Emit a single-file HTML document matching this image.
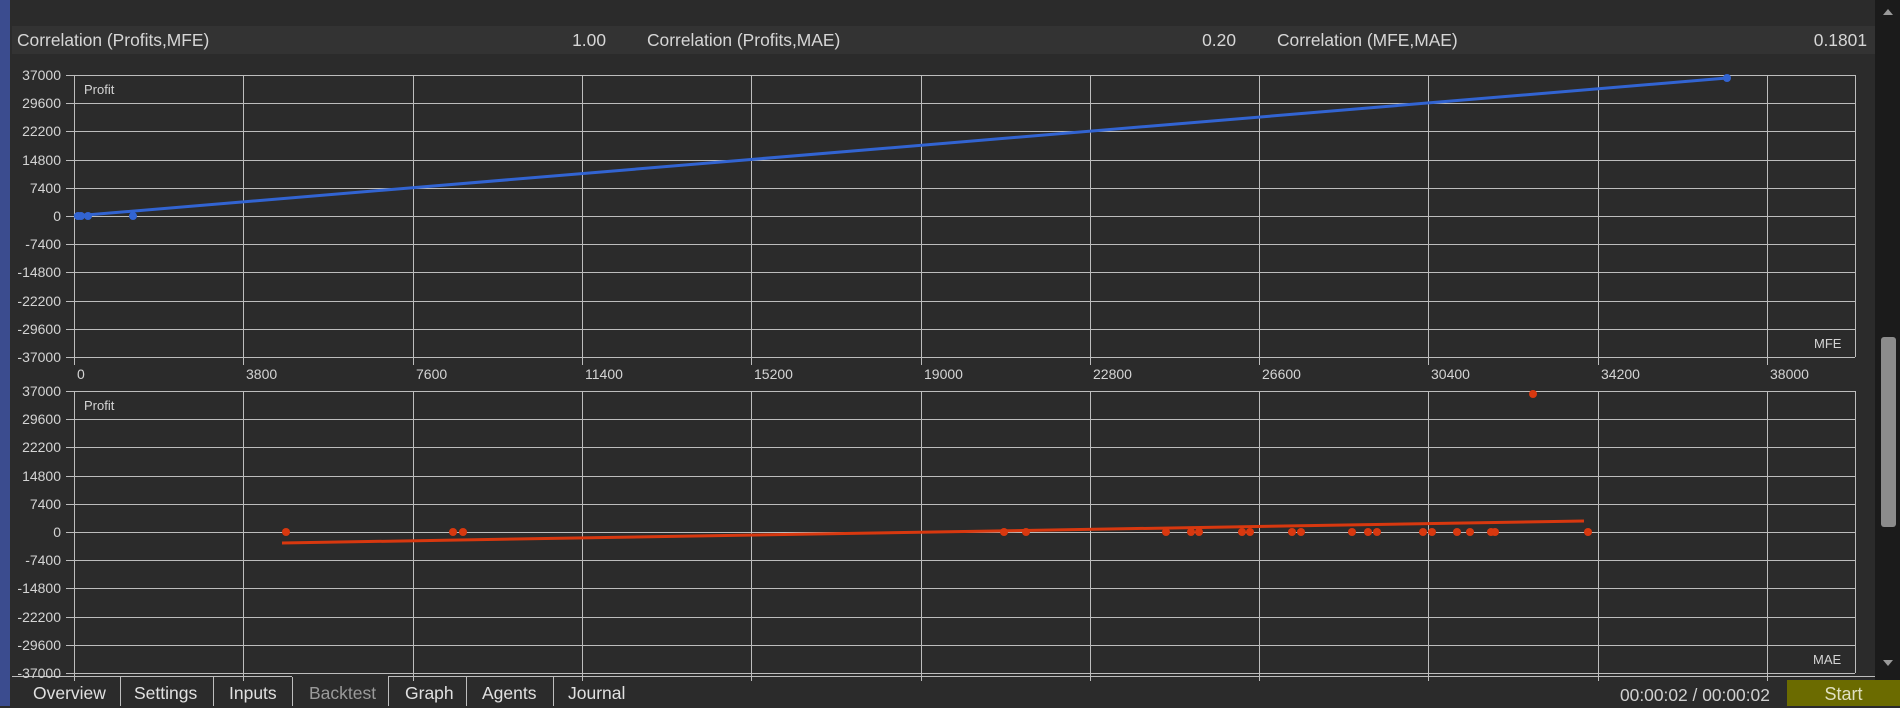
<!DOCTYPE html>
<html><head><meta charset="utf-8"><style>
body{margin:0;width:1900px;height:706px;background:#2b2b2b;overflow:hidden;font-family:"Liberation Sans",sans-serif;position:relative}
.a{position:absolute;white-space:nowrap}
.cb{left:12px;top:26px;width:1863px;height:28px;background:#333333}
.ct{font-size:17.4px;color:#d6d6d6;top:28px;line-height:24px}
.tab{top:682px;font-size:17.5px;color:#e0e0e0;line-height:22px}
.sep{top:677px;width:1px;height:29px;background:#bdbdbd}
</style></head><body>
<div class="a" style="left:0;top:0;width:10px;height:706px;background:#3b4c8f"></div>
<div class="a cb"></div>
<div class="a ct" style="left:17px">Correlation (Profits,MFE)</div>
<div class="a ct" style="right:1294px">1.00</div>
<div class="a ct" style="left:647px">Correlation (Profits,MAE)</div>
<div class="a ct" style="right:664px">0.20</div>
<div class="a ct" style="left:1277px">Correlation (MFE,MAE)</div>
<div class="a ct" style="right:33px">0.1801</div>
<div class="a" style="left:1875px;top:0;width:25px;height:706px;background:#1b1b1b"></div>
<div class="a" style="left:1881px;top:337px;width:15px;height:190px;background:#8c8c8c;border-radius:3px"></div>
<svg class="a" style="left:0;top:0" width="1900" height="706">
<polygon points="1883,15 1893,15 1888,9" fill="#9a9a9a"/>
<polygon points="1883,660 1893,660 1888,666" fill="#9a9a9a"/>
<g stroke="#bdbdbd" stroke-width="1" shape-rendering="crispEdges">
<g id="h1">
<line x1="66" y1="75.5" x2="1855" y2="75.5"/><line x1="66" y1="103.5" x2="1855" y2="103.5"/><line x1="66" y1="131.5" x2="1855" y2="131.5"/><line x1="66" y1="160.5" x2="1855" y2="160.5"/><line x1="66" y1="188.5" x2="1855" y2="188.5"/><line x1="66" y1="216.5" x2="1855" y2="216.5"/><line x1="66" y1="244.5" x2="1855" y2="244.5"/><line x1="66" y1="272.5" x2="1855" y2="272.5"/><line x1="66" y1="301.5" x2="1855" y2="301.5"/><line x1="66" y1="329.5" x2="1855" y2="329.5"/><line x1="66" y1="357.5" x2="1855" y2="357.5"/>
</g>
<use href="#h1" y="316"/>
<line x1="1855.5" y1="75" x2="1855.5" y2="357"/><line x1="1855.5" y1="391" x2="1855.5" y2="673"/>
<g id="v1">
<line x1="74.5" y1="75" x2="74.5" y2="365"/><line x1="243.5" y1="75" x2="243.5" y2="365"/><line x1="413.5" y1="75" x2="413.5" y2="365"/><line x1="582.5" y1="75" x2="582.5" y2="365"/><line x1="751.5" y1="75" x2="751.5" y2="365"/><line x1="921.5" y1="75" x2="921.5" y2="365"/><line x1="1090.5" y1="75" x2="1090.5" y2="365"/><line x1="1259.5" y1="75" x2="1259.5" y2="365"/><line x1="1428.5" y1="75" x2="1428.5" y2="365"/><line x1="1598.5" y1="75" x2="1598.5" y2="365"/><line x1="1767.5" y1="75" x2="1767.5" y2="365"/>
</g>
<use href="#v1" y="316"/>
<line x1="12" y1="676.5" x2="292" y2="676.5"/><line x1="388" y1="676.5" x2="1875" y2="676.5"/>
</g>
<g font-size="14" fill="#d4d4d4" text-anchor="end">
<text x="61" y="80">37000</text><text x="61" y="108">29600</text><text x="61" y="136">22200</text><text x="61" y="165">14800</text><text x="61" y="193">7400</text><text x="61" y="221">0</text><text x="61" y="249">-7400</text><text x="61" y="277">-14800</text><text x="61" y="306">-22200</text><text x="61" y="334">-29600</text><text x="61" y="362">-37000</text>
<text x="61" y="396">37000</text><text x="61" y="424">29600</text><text x="61" y="452">22200</text><text x="61" y="481">14800</text><text x="61" y="509">7400</text><text x="61" y="537">0</text><text x="61" y="565">-7400</text><text x="61" y="593">-14800</text><text x="61" y="622">-22200</text><text x="61" y="650">-29600</text><text x="61" y="678">-37000</text>
</g>
<g font-size="14" fill="#d4d4d4">
<text x="77" y="379">0</text><text x="246" y="379">3800</text><text x="416" y="379">7600</text><text x="585" y="379">11400</text><text x="754" y="379">15200</text><text x="924" y="379">19000</text><text x="1093" y="379">22800</text><text x="1262" y="379">26600</text><text x="1431" y="379">30400</text><text x="1601" y="379">34200</text><text x="1770" y="379">38000</text>
</g>
<g font-size="13" fill="#d4d4d4">
<text x="84" y="94">Profit</text><text x="84" y="410">Profit</text>
<text x="1814" y="348">MFE</text><text x="1813" y="664">MAE</text>
</g>
<line x1="74" y1="216" x2="1727" y2="78" stroke="#3264d2" stroke-width="3"/>
<g fill="#3264d2"><circle cx="78" cy="216" r="4"/><circle cx="81" cy="216" r="4"/><circle cx="88" cy="216" r="4"/><circle cx="133" cy="216" r="4"/><circle cx="1727" cy="78" r="4"/></g>
<line x1="282" y1="543" x2="1584" y2="521" stroke="#d8380f" stroke-width="3"/>
<g fill="#d8380f">
<circle cx="286" cy="532" r="4"/><circle cx="453" cy="532" r="4"/><circle cx="463" cy="532" r="4"/><circle cx="1004" cy="532" r="4"/><circle cx="1026" cy="532" r="4"/><circle cx="1166" cy="532" r="4"/><circle cx="1191" cy="532" r="4"/><circle cx="1199" cy="532" r="4"/><circle cx="1242" cy="532" r="4"/><circle cx="1250" cy="532" r="4"/><circle cx="1292" cy="532" r="4"/><circle cx="1301" cy="532" r="4"/><circle cx="1352" cy="532" r="4"/><circle cx="1368" cy="532" r="4"/><circle cx="1377" cy="532" r="4"/><circle cx="1423" cy="532" r="4"/><circle cx="1432" cy="532" r="4"/><circle cx="1457" cy="532" r="4"/><circle cx="1470" cy="532" r="4"/><circle cx="1491" cy="532" r="4"/><circle cx="1495" cy="532" r="4"/><circle cx="1588" cy="532" r="4"/><circle cx="1533" cy="394" r="4"/>
</g>
</svg>
<div class="a tab" style="left:33px">Overview</div>
<div class="a sep" style="left:120px"></div>
<div class="a tab" style="left:134px">Settings</div>
<div class="a sep" style="left:213px"></div>
<div class="a tab" style="left:229px">Inputs</div>
<div class="a sep" style="left:292px"></div>
<div class="a tab" style="left:309px;color:#9a9a9a">Backtest</div>
<div class="a sep" style="left:388px"></div>
<div class="a tab" style="left:405px">Graph</div>
<div class="a sep" style="left:466px"></div>
<div class="a tab" style="left:482px">Agents</div>
<div class="a sep" style="left:553px"></div>
<div class="a tab" style="left:568px">Journal</div>
<div class="a" style="left:1620px;top:684px;font-size:17.4px;color:#d0d0d0;line-height:22px">00:00:02 / 00:00:02</div>
<div class="a" style="left:1787px;top:680px;width:113px;height:26px;background:#6b6b00;color:#e0e0c0;font-size:18px;text-align:center;line-height:28px">Start</div>
</body></html>
